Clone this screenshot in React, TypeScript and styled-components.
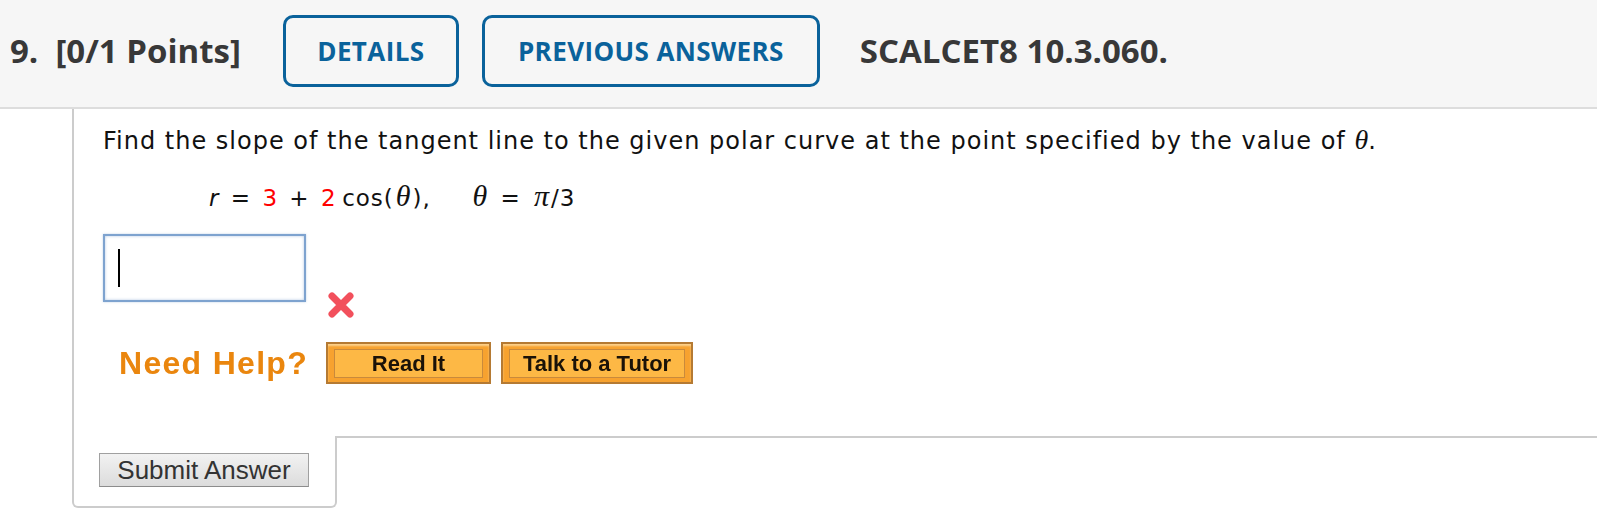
import React from "react";
import styled, { createGlobalStyle } from "styled-components";

const Global = createGlobalStyle`
  html, body { margin: 0; padding: 0; background: #ffffff; }
  body { width: 1597px; height: 514px; overflow: hidden; }
`;

const Page = styled.div`
  display: flex;
  flex-direction: column;
  width: 1597px;
  height: 514px;
`;

const Header = styled.header`
  display: flex;
  align-items: center;
  height: 101px;
  padding: 0 0 6px 10px;
  background: #f6f6f6;
  border-bottom: 2px solid #dddddd;
  box-sizing: content-box;
`;

const Title = styled.h2<{ $gap?: number }>`
  margin: 0 0 0 ${(p) => p.$gap ?? 0}px;
  font-family: "Open Sans", sans-serif;
  font-weight: 700;
  font-size: 33px;
  color: #383838;
  white-space: pre;
`;

const OutlineButton = styled.button<{ $gap: number; $width: number }>`
  margin-left: ${(p) => p.$gap}px;
  width: ${(p) => p.$width}px;
  height: 72px;
  border: 3px solid #0a629b;
  border-radius: 10px;
  background: transparent;
  color: #0a629b;
  font-family: "Open Sans", sans-serif;
  font-weight: 700;
  font-size: 26px;
  letter-spacing: 0.4px;
  padding: 0;
`;

const Body = styled.div`
  display: flex;
  flex-direction: column;
  flex: 1;
  margin-left: 72px;
`;

const Panel = styled.section`
  border-left: 2px solid #cccccc;
  padding: 15px 0 0 29px;
  height: 327px;
  box-sizing: border-box;
  font-family: "DejaVu Sans", sans-serif;
  color: #111;
`;

const Question = styled.p`
  margin: 0;
  font-size: 24px;
  letter-spacing: 1px;
  line-height: 32px;
  white-space: nowrap;
`;

const MathLine = styled.div`
  margin: 23px 0 0 106px;
  font-size: 23px;
  letter-spacing: 1px;
  word-spacing: 3px;
  line-height: 32px;
  white-space: pre;
`;

const Var = styled.span`
  font-style: italic;
`;

const Greek = styled.span<{ $size?: number; $pad?: number }>`
  font-family: "Liberation Serif", serif;
  font-style: italic;
  font-size: ${(p) => p.$size ?? 28}px;
  letter-spacing: 0;
  margin: 0 ${(p) => p.$pad ?? 0}px;
`;

const Red = styled.span`
  color: #ff0000;
`;

const AnswerRow = styled.div`
  display: flex;
  align-items: flex-end;
  margin-top: 20px;
`;

const AnswerBox = styled.div`
  width: 203px;
  height: 68px;
  box-sizing: border-box;
  border: 2px solid #7ea3cf;
  box-shadow: inset 0 0 3px rgba(126, 163, 207, 0.6), 0 0 2px rgba(126, 163, 207, 0.5);
  background: #fff;
  display: flex;
  align-items: center;
  padding-left: 13px;
`;

const Caret = styled.span`
  width: 1.5px;
  height: 38px;
  background: #000;
`;

const WrongMark = styled.svg`
  margin: 0 0 -18px 20px;
  width: 30px;
  height: 30px;
  filter: blur(0.6px);
`;

const HelpRow = styled.div`
  display: flex;
  align-items: center;
  margin-top: 40px;
  margin-left: 16px;
`;

const HelpLabel = styled.span`
  font-family: "Liberation Sans", Arial, sans-serif;
  font-weight: 700;
  font-size: 32px;
  letter-spacing: 1.3px;
  color: #ea860e;
  margin-right: 18px;
  filter: blur(0.3px);
`;

const HelpButton = styled.button<{ $width: number }>`
  width: ${(p) => p.$width}px;
  height: 42px;
  margin-right: 10px;
  padding: 0;
  border: 2px solid #b57a33;
  background: #f7a22f;
  display: flex;
  align-items: stretch;
  box-shadow: inset 0 2px 2px rgba(255, 230, 180, 0.7);
`;

const HelpInner = styled.span`
  flex: 1;
  margin: 5px 6px 4px;
  border: 1.5px solid #c98a3c;
  background: #fdb845;
  display: flex;
  align-items: center;
  justify-content: center;
  font-family: "Liberation Sans", Arial, sans-serif;
  font-weight: 700;
  font-size: 22px;
  color: #1a1208;
  filter: blur(0.3px);
`;

const Footer = styled.div`
  display: flex;
  height: 72px;
`;

const SubmitTab = styled.div`
  width: 265px;
  box-sizing: border-box;
  border-left: 2px solid #cccccc;
  border-right: 2px solid #cccccc;
  border-bottom: 2px solid #cccccc;
  border-radius: 0 0 6px 6px;
  padding: 17px 0 0 25px;
`;

const FooterRest = styled.div`
  flex: 1;
  border-top: 2px solid #cccccc;
`;

const SubmitButton = styled.button`
  width: 210px;
  height: 34px;
  padding: 0;
  border: 1px solid #a0a0a0;
  border-bottom-color: #8c8c8c;
  background: linear-gradient(#f2f2f2, #dcdcdc);
  font-family: "Liberation Sans", Arial, sans-serif;
  font-size: 26px;
  color: #333;
`;

export default function App() {
  return (
    <Page>
      <Global />
      <Header>
        <Title>{"9.  [0/1 Points]"}</Title>
        <OutlineButton $gap={42} $width={176}>DETAILS</OutlineButton>
        <OutlineButton $gap={23} $width={338}>PREVIOUS ANSWERS</OutlineButton>
        <Title $gap={40}>SCALCET8 10.3.060.</Title>
      </Header>
      <Body>
        <Panel>
          <Question>
            Find the slope of the tangent line to the given polar curve at the point specified by the value of <Greek>θ</Greek>.
          </Question>
          <MathLine>
            <Var>r</Var> = <Red>3</Red> + <Red>2</Red>{"\u2009"}cos(<Greek $size={30} $pad={2}>θ</Greek>),{"   \u2009"}<Greek $size={30} $pad={2}>θ</Greek> = <Greek $size={30} $pad={2}>π</Greek>/3
          </MathLine>
          <AnswerRow>
            <AnswerBox>
              <Caret />
            </AnswerBox>
            <WrongMark viewBox="0 0 30 30">
              <path d="M6 6 L24 24 M24 6 L6 24" stroke="#f2505c" strokeWidth="7" strokeLinecap="round" />
            </WrongMark>
          </AnswerRow>
          <HelpRow>
            <HelpLabel>Need Help?</HelpLabel>
            <HelpButton $width={165}>
              <HelpInner>Read It</HelpInner>
            </HelpButton>
            <HelpButton $width={192}>
              <HelpInner>Talk to a Tutor</HelpInner>
            </HelpButton>
          </HelpRow>
        </Panel>
        <Footer>
          <SubmitTab>
            <SubmitButton>Submit Answer</SubmitButton>
          </SubmitTab>
          <FooterRest />
        </Footer>
      </Body>
    </Page>
  );
}
